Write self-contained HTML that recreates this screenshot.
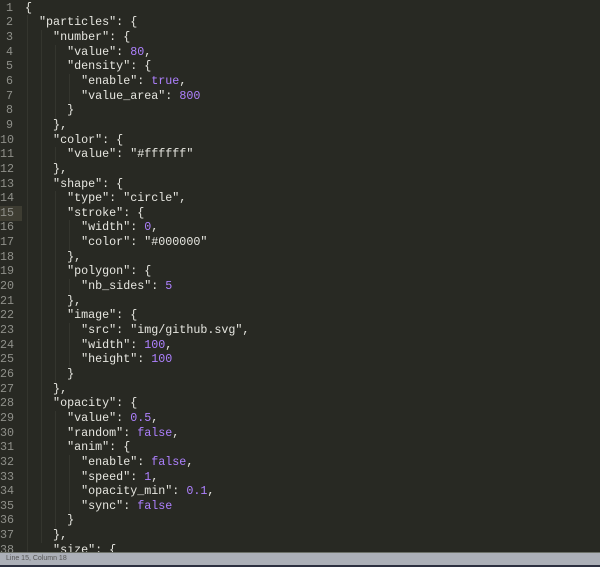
<!DOCTYPE html>
<html><head><style>
html,body{margin:0;padding:0;width:600px;height:567px;overflow:hidden;background:#282923;}
.ed{position:absolute;left:0;top:0;width:600px;height:552px;background:#282923;font-family:"Liberation Mono",monospace;font-size:11.7px;color:#e6e6e0;}
.l{position:absolute;left:0;height:14.65px;line-height:14.65px;white-space:pre;width:600px;}
.n{position:absolute;left:0;width:13px;text-align:right;color:#8f908a;}
.c{position:absolute;left:25px;}
.p{color:#ae81ff;}
.hl{position:absolute;left:0;width:22px;height:14.65px;background:#3e3d32;}
.g{position:absolute;width:1px;background:#34352e;}
.sb{position:absolute;left:0;top:552px;width:600px;height:13px;background:#acb0b8;border-top:1px solid #6c7068;box-sizing:border-box;font-family:"Liberation Sans",sans-serif;font-size:7px;color:#555;line-height:12px;padding-left:6px;}
.bt{position:absolute;left:0;top:565px;width:600px;height:2px;background:#2c3040;}
</style></head><body>
<div class="ed" id="ed">
<div class="hl" style="top:206px"></div>
</div>
<div class="sb">Line 15, Column 18</div>
<div class="bt"></div>
<script>
var L=[
'{',
'  "particles": {',
'    "number": {',
'      "value": <p>80</p>,',
'      "density": {',
'        "enable": <p>true</p>,',
'        "value_area": <p>800</p>',
'      }',
'    },',
'    "color": {',
'      "value": "#ffffff"',
'    },',
'    "shape": {',
'      "type": "circle",',
'      "stroke": {',
'        "width": <p>0</p>,',
'        "color": "#000000"',
'      },',
'      "polygon": {',
'        "nb_sides": <p>5</p>',
'      },',
'      "image": {',
'        "src": "img/github.svg",',
'        "width": <p>100</p>,',
'        "height": <p>100</p>',
'      }',
'    },',
'    "opacity": {',
'      "value": <p>0.5</p>,',
'      "random": <p>false</p>,',
'      "anim": {',
'        "enable": <p>false</p>,',
'        "speed": <p>1</p>,',
'        "opacity_min": <p>0.1</p>,',
'        "sync": <p>false</p>',
'      }',
'    },',
'    "size": {'];
var ed=document.getElementById('ed'),h='';
var lh=14.65,t0=0.7;
var guides=[[25,2,38],[39,3,37],[53,4,9],[53,11,11],[53,14,26],[53,29,36],[67,6,7],[67,16,17],[67,20,20],[67,23,25],[67,32,35]];
guides.forEach(function(g){h+='<div class="g" style="left:'+(g[0]+2)+'px;top:'+(t0+(g[1]-1)*lh)+'px;height:'+((g[2]-g[1]+1)*lh)+'px"></div>';});
L.forEach(function(s,i){
 s=s.replace(/<p>(.*?)<\/p>/g,'<span class="p">$1</span>');
 h+='<div class="l" style="top:'+(t0+i*lh)+'px"><span class="n">'+(i+1)+'</span><span class="c">'+s+'</span></div>';
});
ed.innerHTML+=h;
</script>
</body></html>
